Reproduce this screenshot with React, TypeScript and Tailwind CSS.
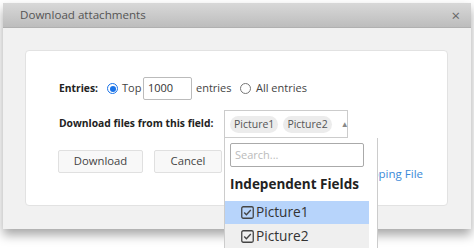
import React from "react";

const font = { fontFamily: '"Open Sans", "Noto Sans", sans-serif' };

function CheckIcon() {
  return (
    <svg width="13" height="13" viewBox="0 0 13 13" className="shrink-0">
      <rect x="0.75" y="0.75" width="11.5" height="11.5" rx="1.5" fill="none" stroke="#444" strokeWidth="1.3" />
      <path d="M3.2 6.6 L5.4 8.8 L9.8 4.1" fill="none" stroke="#444" strokeWidth="1.4" />
    </svg>
  );
}

export default function App() {
  return (
    <div className="w-[474px] h-[248px] bg-white overflow-hidden pt-[3px] pl-[3px]" style={font}>
      <div className="w-[468px] shadow-[0_6px_10px_rgba(0,0,0,0.35)]">
        {/* title bar */}
        <div className="h-[25px] flex items-center justify-between pl-[17px] pr-[11px] bg-gradient-to-b from-[#d8d8d8] to-[#bdbdbd] border-b border-[#b0b0b0]">
          <span className="text-[11.6px] text-[#555]">Download attachments</span>
          <span className="text-[15px] leading-none text-[#666]">×</span>
        </div>

        {/* body */}
        <div className="bg-[#f1f1f1] pt-[22px] pb-[23px] pl-[22px] pr-[23px]">
          <div className="h-[156px] bg-white border border-[#e2e2e2] rounded-[4px] pt-[26px] pl-[33px] text-[11px] text-[#444]">
            {/* entries row */}
            <div className="flex items-center h-[23px] whitespace-nowrap">
              <span className="font-bold text-[10.3px] text-[#222] w-[48px]">Entries:</span>
              <span className="w-[11px] h-[11px] rounded-full border-[1.5px] border-[#1a73e8] flex items-center justify-center">
                <span className="w-[6px] h-[6px] rounded-full bg-[#1a73e8]" />
              </span>
              <span className="ml-[4px] w-[18px]">Top</span>
              <div className="ml-[3px] w-[49px] h-[23px] border border-[#bbb] rounded-[2px] flex items-center pl-[4px] text-[#333]">
                1000
              </div>
              <span className="ml-[4px] w-[33px]">entries</span>
              <span className="ml-[11px] w-[11px] h-[11px] rounded-full border border-[#777]" />
              <span className="ml-[5px]">All entries</span>
            </div>

            {/* field row */}
            <div className="flex items-center mt-[10px] h-[28px] whitespace-nowrap">
              <span className="font-bold text-[10.3px] text-[#222] w-[165px]">Download files from this field:</span>
              <div className="relative">
                <div className="w-[124px] h-[28px] border border-[#ccc] bg-white flex items-center pl-[5px] gap-[5px]">
                  <span className="h-[17px] px-[4px] rounded-full bg-[#ececec] text-[10.5px] leading-[17px] text-[#555]">Picture1</span>
                  <span className="h-[17px] px-[4px] rounded-full bg-[#ececec] text-[10.5px] leading-[17px] text-[#555]">Picture2</span>
                  <span className="ml-[4px] text-[8px] text-[#888]">▲</span>
                </div>
                {/* dropdown */}
                <div className="absolute top-[28px] left-0 w-[154px] h-[120px] bg-white border-l border-r border-[#ccc] z-10">
                  <div className="pt-[5px] pl-[5px]">
                    <div className="w-[134px] h-[24px] border border-[#aaa] rounded-[2px] flex items-center pl-[4px] text-[11px] text-[#bbb]">
                      Search...
                    </div>
                  </div>
                  <div className="pl-[5px] mt-[5px] h-[24px] flex items-center text-[13.5px] font-bold text-[#222]">
                    Independent Fields
                  </div>
                  <div className="mt-[5px] w-[144px] h-[23px] bg-[#b7d4fb] flex items-center pl-[16px] gap-[2px] text-[13.7px] text-[#333]">
                    <CheckIcon />
                    <span>Picture1</span>
                  </div>
                  <div className="w-[144px] h-[24px] bg-[#efefef] flex items-center pl-[16px] gap-[2px] text-[13.7px] text-[#333]">
                    <CheckIcon />
                    <span>Picture2</span>
                  </div>
                </div>
              </div>
            </div>

            {/* buttons row */}
            <div className="flex items-start mt-[12px] pr-[24px]">
              <button className="w-[85px] h-[23px] ml-[-1px] border border-[#e0e0e0] bg-[#f8f8f8] rounded-[2px] text-[11.3px] text-[#444]">
                Download
              </button>
              <button className="w-[68px] h-[23px] ml-[11px] border border-[#e0e0e0] bg-[#f8f8f8] rounded-[2px] text-[11.3px] text-[#444]">
                Cancel
              </button>
              <span className="ml-auto mt-[15px] text-[11.5px] text-[#3b8ad8] whitespace-nowrap">Download Mapping File</span>
            </div>
          </div>
        </div>
      </div>
    </div>
  );
}
